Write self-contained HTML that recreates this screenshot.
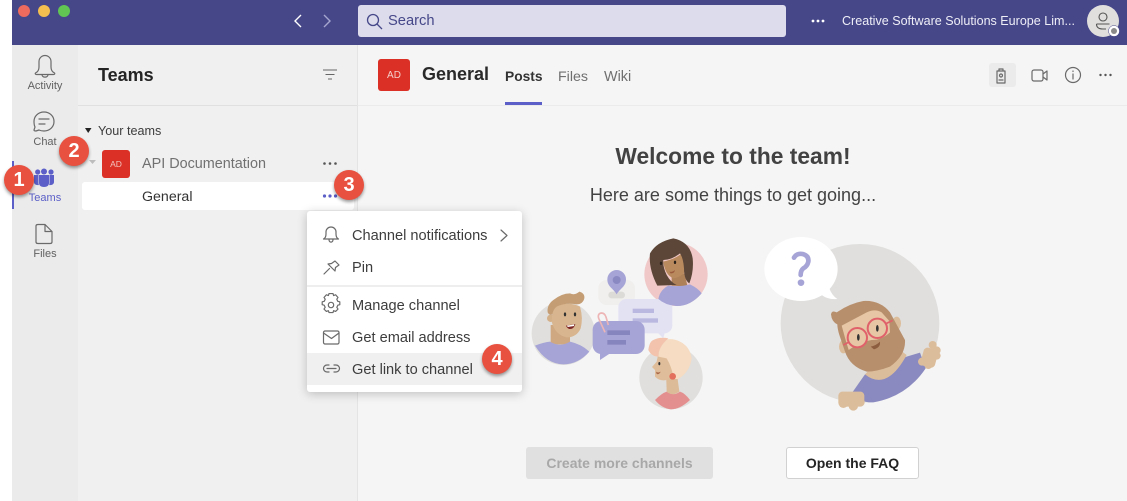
<!DOCTYPE html>
<html><head><meta charset="utf-8">
<style>
html,body{margin:0;padding:0;background:#fff}
body{width:1127px;height:501px;position:relative;overflow:hidden;font-family:"Liberation Sans",sans-serif;color:#242424}
.a{position:absolute;white-space:nowrap}
.b{position:absolute;width:30px;height:30px;border-radius:50%;background:#e8503f;color:#fff;font-weight:bold;font-size:20px;line-height:30px;text-align:center;box-shadow:0 2px 3px rgba(0,0,0,.4)}
.r{font-size:11px;color:#616161;width:66px;text-align:center;left:12px}
.m{font-size:14.6px;line-height:18px;color:#3d3d3d;left:352px}
svg{position:absolute;overflow:visible}
.s{fill:none;stroke:#6a6a6a;stroke-width:1.2;stroke-linecap:round;stroke-linejoin:round}
</style></head><body>
<div class="a" style="left:12px;top:0;width:1115px;height:45px;background:#464789"></div>
<div class="a" style="left:12px;top:45px;width:66px;height:456px;background:#ebebeb"></div>
<div class="a" style="left:78px;top:45px;width:280px;height:456px;background:#f0f0f0"></div>
<div class="a" style="left:358px;top:45px;width:769px;height:456px;background:#f5f5f5"></div>
<div class="a" style="left:78px;top:105px;width:280px;height:1px;background:#e0e0e0"></div>
<div class="a" style="left:358px;top:105px;width:769px;height:1px;background:#ebebeb"></div>
<div class="a" style="left:357px;top:45px;width:1px;height:456px;background:#e4e4e4"></div>

<!-- traffic lights -->
<div class="a" style="left:18px;top:5px;width:12px;height:12px;border-radius:50%;background:#ed6a5e"></div>
<div class="a" style="left:38px;top:5px;width:12px;height:12px;border-radius:50%;background:#f4bf4f"></div>
<div class="a" style="left:58px;top:5px;width:12px;height:12px;border-radius:50%;background:#61c554"></div>
<svg style="left:0;top:0" width="1127" height="45">
<path d="M301 15l-6 6 6 6" fill="none" stroke="#fff" stroke-width="1.4"/>
<path d="M324 15l6 6-6 6" fill="none" stroke="#a6a7cf" stroke-width="1.4"/>
<circle cx="813" cy="21" r="1.4" fill="#fff"/><circle cx="818" cy="21" r="1.4" fill="#fff"/><circle cx="823" cy="21" r="1.4" fill="#fff"/>
</svg>
<div class="a" style="left:358px;top:5px;width:428px;height:32px;background:#dcdcec;border-radius:3px"></div>
<svg style="left:0;top:0" width="400" height="45">
<circle cx="373" cy="20" r="5.5" fill="none" stroke="#464789" stroke-width="1.3"/>
<path d="M377 24l5 5" stroke="#464789" stroke-width="1.3"/>
</svg>
<div class="a" style="left:388px;top:12px;font-size:14.7px;line-height:18px;color:#464789">Search</div>
<div class="a" style="left:842px;top:13px;font-size:12.55px;line-height:16px;color:#eeeef7">Creative Software Solutions Europe Lim...</div>
<div class="a" style="left:1087px;top:5px;width:32px;height:32px;border-radius:50%;background:#e1dfdd"></div>
<svg style="left:1087px;top:5px" width="36" height="36">
<circle cx="16" cy="12" r="4" fill="none" stroke="#555" stroke-width="1.1"/>
<path d="M9.500 19h13M9.500 19c0 4 3 5 6.500 5h3" fill="none" stroke="#555" stroke-width="1.1"/>
<circle cx="27" cy="26" r="5.5" fill="#fff" stroke="#464789" stroke-width=".5"/>
<circle cx="27" cy="26" r="3" fill="#8a8a8a"/>
</svg>

<!-- rail -->
<div class="a" style="left:12px;top:161px;width:2px;height:48px;background:#5b5fc7"></div>
<svg style="left:12px;top:45px" width="66" height="230">
<path class="s" d="M23.500 28c2-1 3.500-3 3.500-6v-5.500a6 6 0 0 1 12 0v5.500c0 3 1.500 5 3.500 6 .6.500.2 1.500-1 1.500H24.500c-1.200 0-1.600-1-1-1.500z"/>
<path class="s" d="M30 29.500c0 3.500 6 3.500 6 0"/>
<path class="s" d="M32 67c5.500 0 10 4 10 9.500s-4.500 9.500-10 9.500c-2 0-3.500-.3-5-1l-3 1c-1 0-2 0-2-1l1-3c-1-2-1-3.500-1-5.500 0-5.500 4.500-9.500 10-9.500z"/>
<path class="s" d="M27 74h10M27 79h6"/>
<g fill="#5b5fc7"><circle cx="25.700" cy="127" r="2.600"/><circle cx="32" cy="126.500" r="3"/><circle cx="39" cy="127" r="2.600"/>
<path d="M22 130h4.500v8c0 1.500.5 2 .5 2-3 .5-5-1-5-3zM37.500 130H42v7c0 2-2 3.500-5 3 0 0 .5-.5.500-2z"/><path d="M27 130h10v8c0 2.500-2 4-5 4s-5-1.500-5-4z"/></g>
<path class="s" d="M26 179.500h7l7 7v10.500c0 1-1 1.500-2 1.500H26c-1 0-2-.5-2-1.500v-16c0-1 1-1.500 2-1.500zM33 179.500v7h7"/>
</svg>
<div class="a r" style="top:80px;line-height:13px">Activity</div>
<div class="a r" style="top:136px;line-height:13px">Chat</div>
<div class="a r" style="top:192px;line-height:13px;color:#5b5fc7">Teams</div>
<div class="a r" style="top:248px;line-height:13px">Files</div>

<!-- teams panel -->
<div class="a" style="left:98px;top:64px;font-size:18px;line-height:22px;font-weight:bold;color:#242424">Teams</div>
<svg style="left:322px;top:69px" width="16" height="12"><path d="M1 1h14M3.500 5.500h9M6 10h4" stroke="#666" stroke-width="1.1" fill="none"/></svg>
<svg style="left:84px;top:128px" width="9" height="6"><path d="M1 0h6.500L4.200 5z" fill="#242424"/></svg>
<div class="a" style="left:98px;top:123px;font-size:12.6px;line-height:16px;color:#3d3d3d">Your teams</div>
<svg style="left:89px;top:160px" width="9" height="6"><path d="M0 0h7L3.500 4z" fill="#bdbdbd"/></svg>
<div class="a" style="left:102px;top:150px;width:28px;height:28px;border-radius:3px;background:#db3025;color:#f3c4c0;font-size:8.500px;line-height:29px;text-align:center">AD</div>
<div class="a" style="left:142px;top:155px;font-size:14.4px;line-height:18px;color:#717171">API Documentation</div>
<div class="a" style="left:82px;top:182px;width:272px;height:28px;background:#fff;border-radius:3px"></div>
<div class="a" style="left:142px;top:188px;font-size:14.2px;line-height:18px;color:#333">General</div>
<svg style="left:322px;top:160px" width="16" height="40">
<circle cx="2.500" cy="3.500" r="1.300" fill="#555"/><circle cx="8" cy="3.500" r="1.300" fill="#555"/><circle cx="13.500" cy="3.500" r="1.300" fill="#555"/>
<circle cx="2.500" cy="36" r="1.600" fill="#5b5fc7"/><circle cx="8" cy="36" r="1.600" fill="#5b5fc7"/><circle cx="13.500" cy="36" r="1.600" fill="#5b5fc7"/>
</svg>

<!-- header main -->
<div class="a" style="left:378px;top:59px;width:32px;height:32px;border-radius:3px;background:#db3025;color:#f5cfcb;font-size:10px;line-height:33px;text-align:center">AD</div>
<div class="a" style="left:422px;top:62px;font-size:18px;line-height:24px;font-weight:bold;color:#2a2a2a">General</div>
<div class="a" style="left:505px;top:68px;font-size:13.8px;line-height:18px;font-weight:bold;color:#333">Posts</div>
<div class="a" style="left:558px;top:68px;font-size:14.2px;line-height:18px;color:#6f6f6f">Files</div>
<div class="a" style="left:604px;top:68px;font-size:14.4px;line-height:18px;color:#6f6f6f">Wiki</div>
<div class="a" style="left:505px;top:102px;width:37px;height:3px;background:#5b5fc7"></div>
<div class="a" style="left:989px;top:63px;width:27px;height:24px;background:#ebebeb;border-radius:3px"></div>
<svg style="left:985px;top:60px" width="140" height="30">
<path class="s" d="M12 11h8v12h-8zM14 11V9h4v2M14 20h4"/><circle class="s" cx="16" cy="15.500" r="1.500"/>
<rect class="s" x="47" y="10" width="11" height="11" rx="2"/><path class="s" d="M58 14l4-3v9l-4-3"/>
<circle class="s" cx="88" cy="15" r="7.500"/><path class="s" d="M88 14v5M88 11v.5"/>
<circle cx="115.500" cy="15" r="1.200" fill="#555"/><circle cx="120.500" cy="15" r="1.200" fill="#555"/><circle cx="125.500" cy="15" r="1.200" fill="#555"/>
</svg>

<!-- welcome -->
<div class="a" style="left:358px;width:750px;text-align:center;top:142px;font-size:22.8px;line-height:28px;font-weight:bold;color:#424242">Welcome to the team!</div>
<div class="a" style="left:358px;width:750px;text-align:center;top:184px;font-size:18px;line-height:22px;color:#424242">Here are some things to get going...</div>

<!-- left illustration (coordinates in 3x space) -->
<svg style="left:520px;top:225px" width="200" height="190" viewBox="0 0 600 570">
<circle cx="130" cy="325" r="95" fill="#e0dfdd"/>
<circle cx="468" cy="148" r="95" fill="#f0c8c8"/>
<circle cx="453" cy="458" r="95" fill="#e0dfdd"/>
<rect x="235" y="165" width="110" height="75" rx="25" fill="#f0efed"/>
<rect x="265" y="200" width="50" height="20" rx="10" fill="#dcdbd8"/>
<path d="M290 208C280 190 262 185 262 163a28 28 0 0 1 56 0C318 185 300 190 290 208z" fill="#a6a4d6"/>
<circle cx="290" cy="165" r="12" fill="#8b89c2"/>
<path d="M410 320h25l-5 20z" fill="#e3e2f3"/>
<rect x="295" y="222" width="162" height="103" rx="24" fill="#e3e2f3"/>
<rect x="338" y="251" width="64" height="13" fill="#bab8e0"/><rect x="338" y="280" width="76" height="13" fill="#bab8e0"/>
<!-- man -->
<path d="M92 300h58v58h-58z" fill="#cfa881"/>
<path d="M45 362Q70 352 90 350Q120 368 150 350Q185 358 208 380Q175 418 130 418Q80 418 45 362z" fill="#a6a4d6"/>
<circle cx="92" cy="280" r="11" fill="#d4b089"/>
<path d="M98 250Q140 225 180 245Q190 280 182 310Q170 337 140 337Q105 330 95 290Z" fill="#d8b58e"/>
<path d="M83 262Q80 240 100 225Q125 205 150 205Q165 212 178 200Q195 205 193 220Q188 238 170 238Q135 232 110 245Q100 252 97 268Q88 272 83 262z" fill="#c49d74"/>
<ellipse cx="135" cy="268" rx="3.500" ry="6" fill="#333"/><ellipse cx="165" cy="268" rx="3.500" ry="6" fill="#333"/>
<path d="M138 302L166 297Q162 313 148 312Q141 310 138 302z" fill="#7d2626"/><path d="M141 302L163 298L162 303L143 306z" fill="#fff"/>
<!-- woman -->
<path d="M455 145h38l10 40-48-3z" fill="#ae8158"/>
<path d="M415 222Q420 195 445 182Q480 186 510 178Q535 190 545 205Q510 245 468 243Q435 240 415 222z" fill="#a6a4d6"/>
<path d="M430 110Q470 100 485 85Q508 110 500 130Q490 155 460 160Q435 150 430 110z" fill="#b98a5d"/>
<circle cx="498" cy="112" r="9" fill="#b98a5d"/>
<path d="M412 182Q385 130 390 85Q410 50 460 40Q510 50 518 100Q522 140 508 175Q492 165 492 130Q490 100 480 85Q455 105 430 105Q428 125 440 150Q452 172 470 180Z" fill="#5c4638"/>
<ellipse cx="423" cy="115" rx="3.500" ry="5" fill="#2b221c"/><ellipse cx="465" cy="112" rx="3.500" ry="5" fill="#2b221c"/>
<path d="M448 140Q458 142 465 135Q463 146 452 145z" fill="#9a5a3c"/>
<!-- woman 2 -->
<path d="M405 525Q425 505 440 500Q460 515 480 500Q495 505 510 525Q480 553 453 553Q425 550 405 525z" fill="#e48f8f"/>
<path d="M438 440L440 500Q458 515 478 500L470 440z" fill="#dcbb98"/>
<path d="M415 385L410 410L396 426L405 435L405 455Q420 470 440 465L470 440L460 380z" fill="#e0bd9a"/>
<path d="M420 350Q450 335 480 350Q510 365 515 400Q510 440 475 462L462 462Q455 425 440 400L415 395z" fill="#f5dcc2"/>
<path d="M385 375Q388 350 400 345Q420 335 445 340Q415 365 415 395Q395 395 385 375z" fill="#f3c3ae"/>
<circle cx="458" cy="454" r="10" fill="#e2705c"/>
<ellipse cx="418" cy="416" rx="3" ry="5" fill="#333"/>
<path d="M408 440Q415 445 422 440Q418 450 410 447z" fill="#a96a4a"/>
<!-- dark bubble -->
<path d="M240 380v25l30-20z" fill="#a6a4d6"/>
<rect x="218" y="288" width="156" height="99" rx="26" fill="#a6a4d6"/>
<rect x="262" y="316" width="68" height="14" fill="#8785bd"/><rect x="262" y="345" width="56" height="14" fill="#8785bd"/>
<path d="M255 322L236 280Q232 266 244 264Q254 264 258 276L265 300" fill="none" stroke="#edb5b5" stroke-width="5"/>
</svg>

<!-- right illustration -->
<svg style="left:750px;top:225px" width="210" height="190" viewBox="0 0 630 570">
<circle cx="330" cy="295" r="238" fill="#e0dfdd"/>
<path d="M305 505L345 448L470 395L510 383L527 430Q470 515 370 532Q335 535 305 505z" fill="#8a8ac0"/>
<path d="M345 448Q410 500 470 390L430 360z" fill="#dcbd9b"/>
<ellipse cx="280" cy="365" rx="13" ry="20" fill="#dcbd9b"/><ellipse cx="440" cy="295" rx="13" ry="20" fill="#dcbd9b"/>
<path d="M243 268Q245 255 260 262Q300 235 340 228Q390 225 420 262L465 345Q468 390 420 425Q380 440 350 440Q300 425 285 380L268 330Q262 310 262 298Q245 290 243 268z" fill="#b88f6c"/>
<path d="M275 302L350 262Q375 250 395 262L418 288L420 322Q395 345 365 345Q330 350 296 375Q285 340 275 302z" fill="#e6c6a4"/>
<circle cx="322" cy="338" r="29" fill="#e6c6a4" stroke="#e0616a" stroke-width="6"/>
<circle cx="382" cy="310" r="29" fill="#e6c6a4" stroke="#e0616a" stroke-width="6"/>
<path d="M295 352L280 360M408 296L428 286" stroke="#e0616a" stroke-width="5"/>
<ellipse cx="325" cy="337" rx="4" ry="10" fill="#333"/><ellipse cx="382" cy="310" rx="4" ry="10" fill="#333"/>
<path d="M362 365Q378 362 390 350Q392 368 372 373z" fill="#8c5d3e"/>
<g fill="#dcbd9b">
<rect x="265" y="500" width="78" height="45" rx="12"/><circle cx="280" cy="535" r="14"/><circle cx="310" cy="543" r="14"/><circle cx="332" cy="532" r="12"/>
<rect x="516" y="370" width="44" height="56" rx="12" transform="rotate(15 538 398)"/><circle cx="548" cy="360" r="12"/><circle cx="560" cy="376" r="12"/><circle cx="560" cy="392" r="12"/><circle cx="516" cy="410" r="12"/><circle cx="535" cy="420" r="12"/>
</g>
<path d="M215 210Q235 225 262 222Q245 210 238 190z" fill="#fff"/>
<ellipse cx="153" cy="132" rx="110" ry="96" fill="#fff"/>
<path d="M132 98Q140 84 158 87Q177 92 175 110Q172 124 160 130Q152 136 152 150" fill="none" stroke="#a6a4d6" stroke-width="14" stroke-linecap="round"/>
<circle cx="153" cy="173" r="10" fill="#a6a4d6"/>
</svg>

<!-- buttons -->
<div class="a" style="left:526px;top:447px;width:187px;height:32px;background:#e0e0e0;border-radius:3px;color:#a8a8a8;font-size:14px;font-weight:bold;line-height:32px;text-align:center">Create more channels</div>
<div class="a" style="left:786px;top:447px;width:131px;height:30px;background:#fff;border:1px solid #d1d1d1;border-radius:3px;color:#242424;font-size:14px;font-weight:bold;line-height:30px;text-align:center">Open the FAQ</div>

<!-- menu -->
<div class="a" style="left:307px;top:211px;width:215px;height:181px;background:#fff;border-radius:3px;box-shadow:0 2px 10px rgba(0,0,0,.22)"></div>
<div class="a" style="left:307px;top:285px;width:215px;height:2px;background:#eee"></div>
<div class="a" style="left:307px;top:353px;width:215px;height:32px;background:#f0f0f0"></div>
<div class="a m" style="top:227px">Channel notifications</div>
<div class="a m" style="top:259px">Pin</div>
<div class="a m" style="top:297px">Manage channel</div>
<div class="a m" style="top:329px">Get email address</div>
<div class="a m" style="top:361px">Get link to channel</div>
<svg style="left:300px;top:200px" width="230" height="190">
<path class="s" d="M23.500 39c2-1 2.500-3 2.500-5v-2a5 5 0 0 1 10 0v2c0 2 .5 4 2.500 5zM29 39.500c0 3.500 4 3.500 4 0"/>
<path class="s" d="M201 30l6 5.500-6 5.500"/>
<path class="s" d="M29.500 68.500L24 74M35 61L39 65L35.500 67.500L35 71L28 64L31.500 63.500Z"/>
<circle class="s" cx="31" cy="105" r="2.700"/>
<path class="s" d="M29 97h4l.6 2 2-.8 2.400 2.800-1.200 1.800 1 2.200 2 .5v3l-2 .5-1 2.200 1.200 1.800-2.400 2.400-2-.8-.6 2h-4l-.6-2-2 .8-2.400-2.400 1.200-1.800-1-2.200-2-.5v-3l2-.5 1-2.200-1.200-1.800 2.400-2.800 2 .8z" transform="translate(0 -.5) scale(1 .97)"/>
<rect class="s" x="23.500" y="131" width="15.500" height="13" rx="1.500"/><path class="s" d="M23.500 133l8 5.500 7.500-5.500"/>
<path class="s" d="M29 165h-2a3.500 3.500 0 0 0 0 7h2M34 165h2a3.500 3.500 0 0 1 0 7h-2M27 168.500h9"/>
</svg>

<!-- badges -->
<div class="b" style="left:4px;top:165px">1</div>
<div class="b" style="left:59px;top:136px">2</div>
<div class="b" style="left:334px;top:170px">3</div>
<div class="b" style="left:482px;top:344px">4</div>
</body></html>
